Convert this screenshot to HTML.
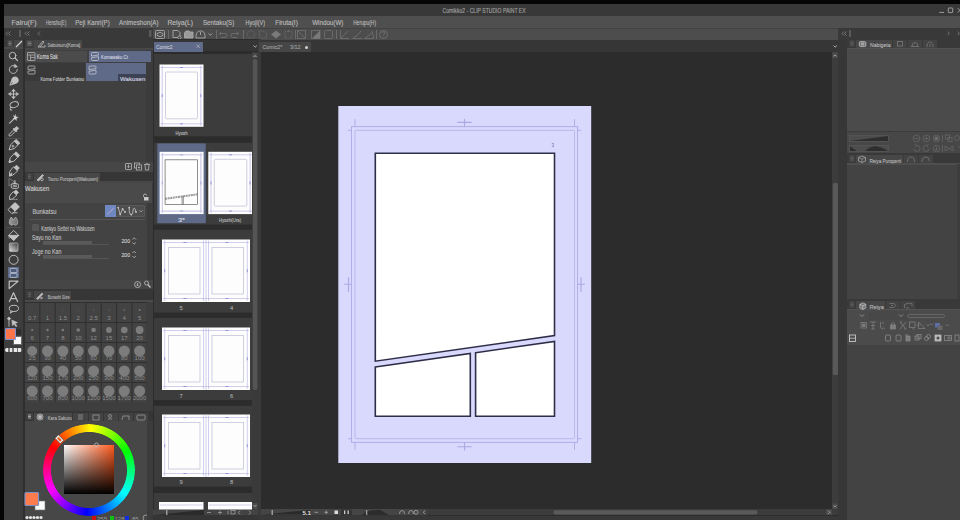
<!DOCTYPE html>
<html><head><meta charset="utf-8">
<style>
*{box-sizing:border-box;margin:0;padding:0}
html,body{width:960px;height:520px;overflow:hidden;background:#050505;font-family:"Liberation Sans",sans-serif;color:#c8c8c8}
.a{position:absolute}
.t{position:absolute;font-size:7px;line-height:8px;white-space:nowrap;color:#c4c4c4}
svg{position:absolute;overflow:visible}
</style></head><body>
<!-- ===== title bar ===== -->
<div class="a" style="left:4px;top:4px;width:956px;height:12px;background:#383838"></div>
<svg style="left:0;top:0" width="960" height="20">
 <g stroke="#a8a8a8" stroke-width="0.9" fill="none">
  <line x1="939.3" y1="12.4" x2="944" y2="12.4"/>
  <rect x="948.3" y="8" width="4.4" height="4.6" rx="0.6"/>
  <path d="M957.8 8.2 L962 12.6 M957.8 12.6 L962 8.2"/>
 </g>
</svg>
<!-- ===== menu bar ===== -->
<div class="a" style="left:4px;top:16px;width:956px;height:12px;background:#4f4f4f"></div>
<!-- ===== dock header / toolbar row ===== -->
<div class="a" style="left:4px;top:28px;width:956px;height:11px;background:#393939"></div>
<div class="a" style="left:153px;top:28px;width:685px;height:12px;background:#4d4d4d"></div><div class="a" style="left:153px;top:28px;width:685px;height:1px;background:#424242"></div>
<svg style="left:0;top:0" width="960" height="45">
 <g stroke="#7a7a7a" stroke-width="0.9" fill="none">
  <path d="M8 31.5 L6 33.5 L8 35.5 M10.5 31.5 L8.5 33.5 L10.5 35.5"/>
  <path d="M27 31.5 L25 33.5 L27 35.5 M29.5 31.5 L27.5 33.5 L29.5 35.5"/>
  <path d="M40 31.5 L38 33.5 L40 35.5"/>
  <path d="M844 31.5 L842 33.5 L844 35.5 M846.5 31.5 L844.5 33.5 L846.5 35.5"/>
  <path d="M947.6 31.6 L949.4 33.4 L947.6 35.2 M957.6 31.6 L959.4 33.4 L957.6 35.2"/>
 </g>
 <g fill="#5a5a5a">
  <rect x="19" y="30" width="2" height="7"/>
  <rect x="149" y="30" width="2.5" height="7"/>
  <rect x="849" y="30" width="2" height="7"/>
 </g>
 <!-- toolbar icons -->
 <g stroke="#a8a8a8" stroke-width="0.9" fill="none">
  <rect x="155.5" y="30.5" width="9" height="8" rx="1"/>
  <ellipse cx="160" cy="34.5" rx="3" ry="2"/>
  <path d="M173 30.5 L178 30.5 L180 32.5 L180 37.5 L173 37.5 Z"/>
  <circle cx="179.5" cy="37.5" r="1.6" fill="#484848"/>
  <path d="M184.5 33 L186 31 L189 31 L190 32 L193 32 L193 38 L184.5 38 Z" fill="#9a9a9a"/>
  <path d="M196 38 L205 38 L205 36 Q205 31 200.5 31 Q196 31 196 36 Z"/>
  <path d="M200.5 32 L200.5 35"/>
  <path d="M208.5 33.5 L210.3 35.3 L212.1 33.5"/>
 </g>
 <g stroke="#6e6e6e" stroke-width="0.9" fill="none">
  <line x1="168.5" y1="30" x2="168.5" y2="39"/>
  <line x1="216.5" y1="30" x2="216.5" y2="39"/>
  <line x1="243.5" y1="30" x2="243.5" y2="39"/>
  <line x1="295.5" y1="30" x2="295.5" y2="39"/>
  <line x1="336.5" y1="30" x2="336.5" y2="39"/>
  <line x1="376.5" y1="30" x2="376.5" y2="39"/>
  <path d="M221 32 L219.5 33.5 L221 35 M219.5 33.5 L225 33.5 Q227 33.5 227 35.5 Q227 37.5 225 37.5 L221 37.5"/>
  <path d="M237 32 L238.5 33.5 L237 35 M238.5 33.5 L233 33.5 Q231 33.5 231 35.5 Q231 37.5 233 37.5 L237 37.5"/>
  <circle cx="251" cy="34.5" r="3.8" stroke-dasharray="1 0.8"/>
  <path d="M259.5 31 L264 31 L266.5 33.5 L266.5 38 L259.5 38 Z" stroke-dasharray="1 0.8"/>
  <rect x="285" y="31.5" width="7" height="6.5" stroke-dasharray="1 0.8"/>
  <path d="M288.5 30 L288.5 31.5"/>
  <rect x="297.5" y="30.5" width="8" height="8"/>
  <path d="M297.5 30.5 L305.5 38.5"/>
  <rect x="324.5" y="30.5" width="8" height="8" rx="1"/>
  <path d="M340.5 30.5 L340.5 38.5 L349 38.5 M340.5 38.5 L348 31"/>
  <path d="M352.5 38.5 L362 38.5 M353 38 Q357 37 361 31"/>
  <path d="M364.5 38.5 L374 38.5 L372 31 M364.5 38.5 L372 33"/>
  <circle cx="383.5" cy="34.5" r="4"/>
  <path d="M382 33.2 Q382 31.8 383.5 31.8 Q385 31.8 385 33.2 Q385 34.4 383.5 34.8 L383.5 35.6 M383.5 36.8 L383.5 37.4"/>
 </g>
 <path d="M271 34.5 L276 30.5 L281 34.5 L276 38.5 Z" fill="#7a7a7a"/>
 <rect x="311.5" y="30.5" width="8.5" height="8" fill="none" stroke="#6e6e6e" stroke-width="0.9"/><path d="M312 38.5 L320 30.5 L320 38.5 Z" fill="#7a7a7a"/>
</svg>
<!-- ===== left tab row ===== -->
<div class="a" style="left:4px;top:39px;width:149px;height:9px;background:#393939"></div>
<div class="a" style="left:7px;top:40px;width:6px;height:7px;background:#414141"></div>
<div class="a" style="left:14px;top:40px;width:9px;height:8px;background:#474747"></div>
<div class="a" style="left:26px;top:40px;width:8px;height:7px;background:#414141"></div>
<div class="a" style="left:34px;top:40px;width:48px;height:8px;background:#474747"></div>
<!-- ===== tool palette ===== -->
<div class="a" style="left:4px;top:48px;width:19px;height:472px;background:#3d3d3d"></div>
<div class="a" style="left:4px;top:47px;width:19px;height:2px;background:#4a4a4a"></div>
<div class="a" style="left:23px;top:39px;width:2px;height:481px;background:#2f2f2f"></div>
<div class="a" style="left:8px;top:267px;width:11px;height:11px;background:#5c6a8c"></div>
<svg style="left:0;top:0" width="30" height="360">
 <g stroke="#8a8a8a" stroke-width="0.8"><path d="M8.5 42 H11.5 M8.5 43.5 H11.5 M8.5 45 H11.5 M27.5 42 H31.5 M27.5 43.5 H31.5 M27.5 45 H31.5"/></g>
 <path d="M16 47 L22 41" stroke="#cfcfcf" stroke-width="1.3"/>
 <path d="M38 47 L43 41 L44 42 L40 47 Z M40 47 L45 47 L45 45" stroke="#c0c0c0" stroke-width="0.8" fill="none"/>
 <g stroke="#c2c2c2" stroke-width="0.95" fill="none" stroke-linecap="round" stroke-linejoin="round">
  <!-- magnifier -->
  <circle cx="12.6" cy="55.6" r="3.3"/><path d="M15 58 L17.6 60.6" stroke-width="1.2"/>
  <!-- rotate -->
  <path d="M17.2 69.5 A3.9 3.9 0 1 1 14.5 65.8" stroke-dasharray="1 0.8"/><path d="M14.8 64.3 L17.6 66.8 L14.4 67.6 Z" fill="#c2c2c2" stroke-width="0.5"/>
  <!-- hand/zoom (cone) -->
  <path d="M10 84.8 L11.7 80.2 A3.3 3.3 0 1 1 15.8 83.4 Z" fill="#c2c2c2"/><path d="M12.2 82.6 L10.8 84" stroke="#3d3d3d" stroke-width="0.8"/>
  <!-- move -->
  <path d="M13.5 89.3 V98.7 M8.8 94 H18.2"/><path d="M11.9 91 L13.5 89.2 L15.1 91 Z M11.9 97 L13.5 98.8 L15.1 97 Z M10.5 92.4 L8.7 94 L10.5 95.6 Z M16.5 92.4 L18.3 94 L16.5 95.6 Z" fill="#c2c2c2" stroke-width="0.6"/>
  <!-- lasso -->
  <ellipse cx="14.2" cy="104.6" rx="4.3" ry="2.9" transform="rotate(-18 14.2 104.6)"/><path d="M11 107 Q9.5 108.6 10.6 110.2 L11.8 110"/>
  <!-- wand -->
  <path d="M9.6 123.2 L14 118.8" stroke-width="1.1"/><path d="M15.6 114.6 L16.1 116.9 L18.4 117.2 L16.4 118.3 L16.4 120.6 L15.1 118.9 L12.9 119.3 L14.3 117.5 L13.4 115.3 L15.2 116.5 Z" fill="#dcdcdc" stroke-width="0.4"/>
 </g>
 <g stroke="#c2c2c2" stroke-width="0.9" fill="none" stroke-linejoin="round">
  <!-- eyedropper -->
  <g transform="translate(13.4 131.7) rotate(-45)"><path d="M-6 0 L-4.8 -1.1 H1.8 V1.1 H-4.8 Z"/><rect x="1.8" y="-2.1" width="1.1" height="4.2" fill="#c2c2c2"/><rect x="2.9" y="-1.5" width="3.2" height="3" rx="1.2" fill="#c2c2c2"/></g>
 </g>
 <line x1="6.5" y1="138.5" x2="21.5" y2="138.5" stroke="#555" stroke-width="0.8"/>
 <g stroke="#c2c2c2" stroke-width="0.9" fill="none" stroke-linejoin="round">
  <!-- pen -->
  <g transform="translate(13.5 145.6) rotate(-45)"><path d="M-6.2 0 L-1.5 -2.6 H3.8 V2.6 H-1.5 Z"/><rect x="3.8" y="-2.6" width="2.4" height="5.2" fill="#c2c2c2"/><circle cx="-0.8" cy="0" r="0.9"/></g>
  <!-- pencil -->
  <g transform="translate(13.5 158) rotate(-45)"><path d="M-6.2 0 L-2 -2.5 H3.6 V2.5 H-2 Z"/><path d="M-6.2 0 L-4.2 -1.2 V1.2 Z" fill="#c2c2c2"/><rect x="3.6" y="-2.5" width="2.6" height="5" fill="#c2c2c2"/></g>
  <!-- brush -->
  <g transform="translate(13.5 171) rotate(-45)"><path d="M-6.4 0.8 Q-4 -2.8 -0.5 -2.8 H3 V2.8 H-0.5 Q-4 2.8 -6.4 0.8 Z"/><path d="M-6.4 0.8 Q-4.5 -0.6 -2.5 0.2 Q-4 2.2 -6.4 0.8 Z" fill="#c2c2c2"/><rect x="3" y="-2" width="3.2" height="4" fill="#c2c2c2"/></g>
  <!-- airbrush -->
  <path d="M9 178.5 L14 181.5 L9 186 Z" stroke="#8a8a8a" stroke-width="0.7"/>
  <rect x="11.3" y="183.8" width="7.2" height="4.6" rx="1.6"/><rect x="12.8" y="185.4" width="4.2" height="1.3" fill="#c2c2c2" stroke="none"/><path d="M14.9 180.2 V183.8" stroke-width="1.2"/><path d="M13.3 183.8 Q14.9 182 16.5 183.8" fill="#c2c2c2"/>
  <!-- decoration -->
  <g transform="translate(13.2 195.2) rotate(-45)"><path d="M-5.6 0.6 Q-3.8 -2.6 -0.5 -2.4 H2.6 V2.4 H-0.5 Q-3.8 2.6 -5.6 0.6 Z"/><rect x="2.6" y="-1.8" width="3" height="3.6" fill="#c2c2c2"/></g>
  <path d="M12.5 199.3 H18" stroke-dasharray="1.2 0.6"/>
  <!-- eraser -->
  <g transform="translate(13.6 208.3) rotate(-45)"><rect x="-5" y="-3" width="10" height="6" rx="0.8"/><rect x="-1" y="-3" width="6" height="6" rx="0.6" fill="#c2c2c2"/></g>
  <path d="M12.5 212.8 H17.5"/>
  <!-- blend -->
  <path d="M9.2 222.3 Q9.2 219.3 11.3 217 Q12.8 218.6 13.4 220 Q14 218.6 15.6 217 Q17.8 219.3 17.8 222.3 Q17.8 225 15.6 225.2 Q14.2 225.2 13.5 224 Q12.8 225.2 11.4 225.2 Q9.2 225 9.2 222.3 Z" fill="url(#gr2)" stroke-width="0.6"/>
 </g>
 <line x1="6.5" y1="227.5" x2="21.5" y2="227.5" stroke="#555" stroke-width="0.8"/>
 <g stroke="#c2c2c2" stroke-width="0.95" fill="none" stroke-linejoin="round">
  <!-- fill -->
  <path d="M8.7 235.4 L13.7 230.4 L18.7 235.4 L13.7 240.4 Z"/><path d="M8.7 235.4 H18.7 L13.7 240.4 Z" fill="#c2c2c2"/><path d="M9.2 236 Q8.6 238.2 9.8 238.6" stroke-width="0.8"/>
  <!-- gradient -->
  <rect x="9.3" y="243" width="8.7" height="8.4" rx="1" fill="url(#gr1)" stroke="#bdbdbd" stroke-width="0.7"/>
  <!-- circle -->
  <circle cx="13.6" cy="259.8" r="4.5"/>
  <!-- frame -->
  <rect x="10.2" y="268.4" width="6.8" height="4.2" rx="0.8" stroke="#c3c8d8" stroke-width="0.8" fill="#4f5c7c"/><rect x="10.2" y="273.4" width="6.8" height="4" rx="0.8" stroke="#c3c8d8" stroke-width="0.8" fill="#4f5c7c"/>
  <!-- ruler -->
  <path d="M9.2 288.6 V281.2 H18 Z" stroke-width="1.2"/>
  <!-- text -->
  <path d="M9.2 302 L13.5 292.7 L17.8 302 M10.8 298.7 H16.2" stroke-width="1.2"/>
  <!-- balloon -->
  <ellipse cx="13.9" cy="308.4" rx="4.6" ry="3.1"/><path d="M11.2 310.8 L10.2 313.2 L13 311.4"/>
  <!-- correction -->
  <path d="M9 318.2 V326.5 M7.6 318.6 H10.4" stroke-width="0.9"/><path d="M11.8 320 L17.6 322.6 L15 323.4 L17 326 L16 326.8 L14 324.2 L12.4 325.8 Z" fill="#c2c2c2" stroke-width="0.5"/><circle cx="9" cy="318.6" r="1.2" fill="#c2c2c2"/>
 </g>
 <defs><linearGradient id="gr2" x1="0" y1="0" x2="1" y2="0"><stop offset="0" stop-color="#9a9a9a"/><stop offset="1" stop-color="#707070"/></linearGradient></defs>
 <defs><linearGradient id="gr1" x1="1" y1="0" x2="0" y2="1"><stop offset="0" stop-color="#3a3a3a"/><stop offset="1" stop-color="#e0e0e0"/></linearGradient></defs>
</svg>
<!-- color swatches -->
<div class="a" style="left:15px;top:329px;width:6px;height:6px;background:#2e2e2e"></div>
<div class="a" style="left:13px;top:336px;width:9px;height:9px;background:#fafafa;border:1px solid #6a6a6a"></div>
<div class="a" style="left:5px;top:328px;width:11px;height:12px;background:#fb7348;border:1.3px solid #7b93d6;border-radius:1px"></div>
<div class="a" style="left:5px;top:348px;width:17px;height:4px;background:repeating-linear-gradient(90deg,#e8e8e8 0 3px,#777 3px 4.5px);border-radius:2px"></div>
<!-- ===== sub tool panel ===== -->
<div class="a" style="left:25px;top:48px;width:128px;height:124px;background:#3c3c3c"></div><div class="a" style="left:25px;top:162px;width:128px;height:10px;background:#464646"></div>
<div class="a" style="left:25px;top:48px;width:128px;height:2px;background:#474747"></div>
<div class="a" style="left:25px;top:50px;width:120.5px;height:112px;background:#404040"></div>
<div class="a" style="left:25px;top:51px;width:62px;height:11px;background:#4b4b4b"></div>
<div class="a" style="left:89px;top:51px;width:62px;height:11px;background:#5e6a88"></div>
<div class="a" style="left:25px;top:63px;width:60px;height:18px;background:#393939"></div>
<div class="a" style="left:86px;top:63px;width:60px;height:18px;background:#5e6a88"></div>
<div class="a" style="left:118px;top:74px;width:28px;height:7px;background:#3c4254"></div>
<svg style="left:0;top:0" width="160" height="180">
 <g stroke="#a9a9a9" stroke-width="0.9" fill="none">
  <rect x="27.5" y="52.5" width="7.5" height="8" rx="0.5"/><path d="M27.5 55 H35 M30.5 55 V60.5 M30.5 57.5 H35" stroke-width="0.8"/>
  <path d="M91.5 56.1 V53.5 Q91.5 52.5 92.5 52.5 H97.5 Q98.5 52.5 98.5 53.5 V55.1 Z" stroke="#b8bcc8"/><path d="M91.5 57.7 L98.5 56.7 V59.5 Q98.5 60.5 97.5 60.5 H92.5 Q91.5 60.5 91.5 59.5 Z" stroke="#b8bcc8"/>
  <path d="M28 69.6 V67 Q28 66 29 66 H34 Q35 66 35 67 V68.6 Z" stroke="#a9a9a9"/><path d="M28 71.2 L35 70.2 V73 Q35 74 34 74 H29 Q28 74 28 73 Z" stroke="#a9a9a9"/>
  <path d="M89 69.6 V67 Q89 66 90 66 H95 Q96 66 96 67 V68.6 Z" stroke="#b8bcc8"/><path d="M89 71.2 L96 70.2 V73 Q96 74 95 74 H90 Q89 74 89 73 Z" stroke="#b8bcc8"/>
 </g>
 <!-- bottom bar icons -->
 <g stroke="#b6b6b6" stroke-width="0.8" fill="none">
  <rect x="125.5" y="163.5" width="6" height="6" rx="0.5"/><path d="M128.5 164.5 V167.5 M127 166.2 L128.5 167.7 L130 166.2"/>
  <rect x="134.5" y="163" width="5" height="5"/><rect x="136.5" y="165" width="5" height="5" fill="#3a3a3a"/><path d="M139 166.2 V168.8 M137.7 167.5 H140.3"/>
  <path d="M144 164.5 H150 M145 164.5 L145.5 170 H148.5 L149 164.5 M146.2 163.5 H147.8"/>
 </g>
</svg>
<!-- ===== tool property ===== -->
<div class="a" style="left:25px;top:172px;width:128px;height:9px;background:#363636"></div>
<div class="a" style="left:26px;top:173px;width:7px;height:7px;background:#3e3e3e"></div>
<div class="a" style="left:34px;top:173px;width:66px;height:8px;background:#474747"></div>
<div class="a" style="left:25px;top:181px;width:128px;height:108px;background:#3b3b3b"></div>
<div class="a" style="left:25px;top:181px;width:128px;height:2px;background:#474747"></div>
<div class="a" style="left:25px;top:183px;width:122px;height:97px;background:#434343"></div>
<div class="a" style="left:25px;top:183px;width:127px;height:20px;background:#4a4a4a"></div>
<div class="a" style="left:25px;top:280px;width:128px;height:9.5px;background:#464646"></div>
<div class="a" style="left:104.8px;top:205px;width:40.2px;height:11.8px;background:#4e4e4e;border:0.6px solid #585858;border-radius:1px"></div>
<div class="a" style="left:104.8px;top:205px;width:11.3px;height:11.8px;background:#7088c0"></div>
<div class="a" style="left:30px;top:219px;width:115px;height:1px;background:#555"></div>
<div class="a" style="left:32px;top:224px;width:7px;height:7px;background:#555;border-radius:1px"></div>
<div class="a" style="left:43px;top:244px;width:66px;height:1px;background:#555"></div>
<div class="a" style="left:43px;top:241px;width:49px;height:3px;background:#5a5a5a"></div>
<div class="a" style="left:43px;top:258px;width:66px;height:1px;background:#555"></div>
<div class="a" style="left:43px;top:255px;width:49px;height:3px;background:#5a5a5a"></div>
<svg style="left:0;top:0" width="160" height="300">
 <g stroke="#c0c0c0" stroke-width="0.8" fill="none">
  <path d="M37 180 L42.5 174.5 L43.5 175.5 L38.5 181 Z" fill="#bbb"/><circle cx="42" cy="179.5" r="1.3"/>
  <path d="M107.3 214.4 L113.8 208" stroke="#c8a8d0" stroke-width="0.9"/>
  <path d="M118.2 207.6 L120.2 214.4 L122.6 209 L125 212" stroke="#c8c8c8"/>
  <g fill="#c8c8c8" stroke="none"><circle cx="118.2" cy="207.6" r="0.9"/><circle cx="120.2" cy="214.4" r="0.9"/><circle cx="122.6" cy="209" r="0.9"/><circle cx="125" cy="212" r="0.9"/><circle cx="129.2" cy="207.6" r="0.9"/><circle cx="131.2" cy="214.6" r="0.9"/><circle cx="136" cy="212" r="0.9"/></g>
  <path d="M129.2 207.6 Q129 214.6 131.2 214.6 Q133 214.6 133 211 Q133 208.2 134.2 208.2 Q135.4 208.2 136 212" stroke="#c8c8c8"/>
  <path d="M139.3 210.2 L141 211.9 L142.7 210.2" stroke="#aaa"/>
  <path d="M132.5 239.5 L134.2 237.8 L135.9 239.5 M132.5 242.5 L134.2 244.2 L135.9 242.5"/>
  <path d="M132.5 253 L134.2 251.3 L135.9 253 M132.5 256 L134.2 257.7 L135.9 256"/>
  <rect x="144" y="197" width="4.5" height="3.5" fill="#c8c8c8" stroke="none"/><path d="M143.5 197 V195.8 Q143.5 194 145 194 Q146.5 194 146.5 195.5" stroke-width="0.8"/>
  <circle cx="137.6" cy="284.6" r="3"/><path d="M137.6 283 V285.8 M136.5 284.8 L137.6 285.9 L138.7 284.8"/>
  <circle cx="146.5" cy="283" r="2"/><path d="M147.8 284.5 L150.5 287.5" stroke-width="1.2"/>
 </g>
</svg>
<!-- ===== brush size ===== -->
<div class="a" style="left:25px;top:289px;width:128px;height:11px;background:#363636"></div>
<div class="a" style="left:26px;top:291px;width:7px;height:7px;background:#3e3e3e"></div>
<div class="a" style="left:34px;top:291px;width:37px;height:9px;background:#474747"></div>
<div class="a" style="left:25px;top:300px;width:128px;height:112px;background:#3e3e3e"></div>
<div class="a" style="left:25px;top:300px;width:128px;height:2px;background:#4b4b4b"></div>
<div class="a" style="left:24px;top:302px;width:123px;height:101px;background:#2f2f2f"></div>
<svg style="left:0;top:0" width="160" height="420">
 <path d="M36.5 298.5 L42 293 L43 294 L38 299.5 Z" fill="#bbb" stroke="#c0c0c0" stroke-width="0.6"/><circle cx="41.5" cy="298" r="1.3" fill="#999"/>
 <g><rect x="25.00" y="303.00" width="14.35" height="19.00" fill="#434343"/><rect x="40.35" y="303.00" width="14.35" height="19.00" fill="#434343"/><rect x="55.70" y="303.00" width="14.35" height="19.00" fill="#434343"/><rect x="71.05" y="303.00" width="14.35" height="19.00" fill="#434343"/><rect x="86.40" y="303.00" width="14.35" height="19.00" fill="#434343"/><rect x="101.75" y="303.00" width="14.35" height="19.00" fill="#434343"/><rect x="117.10" y="303.00" width="14.35" height="19.00" fill="#434343"/><rect x="132.45" y="303.00" width="14.35" height="19.00" fill="#434343"/><rect x="25.00" y="323.00" width="14.35" height="19.00" fill="#434343"/><rect x="40.35" y="323.00" width="14.35" height="19.00" fill="#434343"/><rect x="55.70" y="323.00" width="14.35" height="19.00" fill="#434343"/><rect x="71.05" y="323.00" width="14.35" height="19.00" fill="#434343"/><rect x="86.40" y="323.00" width="14.35" height="19.00" fill="#434343"/><rect x="101.75" y="323.00" width="14.35" height="19.00" fill="#434343"/><rect x="117.10" y="323.00" width="14.35" height="19.00" fill="#434343"/><rect x="132.45" y="323.00" width="14.35" height="19.00" fill="#434343"/><rect x="25.00" y="343.00" width="14.35" height="19.00" fill="#434343"/><rect x="40.35" y="343.00" width="14.35" height="19.00" fill="#434343"/><rect x="55.70" y="343.00" width="14.35" height="19.00" fill="#434343"/><rect x="71.05" y="343.00" width="14.35" height="19.00" fill="#434343"/><rect x="86.40" y="343.00" width="14.35" height="19.00" fill="#434343"/><rect x="101.75" y="343.00" width="14.35" height="19.00" fill="#434343"/><rect x="117.10" y="343.00" width="14.35" height="19.00" fill="#434343"/><rect x="132.45" y="343.00" width="14.35" height="19.00" fill="#434343"/><rect x="25.00" y="363.00" width="14.35" height="19.00" fill="#434343"/><rect x="40.35" y="363.00" width="14.35" height="19.00" fill="#434343"/><rect x="55.70" y="363.00" width="14.35" height="19.00" fill="#434343"/><rect x="71.05" y="363.00" width="14.35" height="19.00" fill="#434343"/><rect x="86.40" y="363.00" width="14.35" height="19.00" fill="#434343"/><rect x="101.75" y="363.00" width="14.35" height="19.00" fill="#434343"/><rect x="117.10" y="363.00" width="14.35" height="19.00" fill="#434343"/><rect x="132.45" y="363.00" width="14.35" height="19.00" fill="#434343"/><rect x="25.00" y="383.00" width="14.35" height="19.00" fill="#434343"/><rect x="40.35" y="383.00" width="14.35" height="19.00" fill="#434343"/><rect x="55.70" y="383.00" width="14.35" height="19.00" fill="#434343"/><rect x="71.05" y="383.00" width="14.35" height="19.00" fill="#434343"/><rect x="86.40" y="383.00" width="14.35" height="19.00" fill="#434343"/><rect x="101.75" y="383.00" width="14.35" height="19.00" fill="#434343"/><rect x="117.10" y="383.00" width="14.35" height="19.00" fill="#434343"/><rect x="132.45" y="383.00" width="14.35" height="19.00" fill="#434343"/><circle cx="32.17" cy="310.00" r="0.3" fill="#7c7c7c"/><text x="32.17" y="319.50" font-size="6" fill="#8e8e8e" text-anchor="middle" font-family="Liberation Sans">0.7</text><circle cx="47.52" cy="310.00" r="0.35" fill="#7c7c7c"/><text x="47.52" y="319.50" font-size="6" fill="#8e8e8e" text-anchor="middle" font-family="Liberation Sans">1</text><circle cx="62.88" cy="310.00" r="0.4" fill="#7c7c7c"/><text x="62.88" y="319.50" font-size="6" fill="#8e8e8e" text-anchor="middle" font-family="Liberation Sans">1.5</text><circle cx="78.22" cy="310.00" r="0.45" fill="#7c7c7c"/><text x="78.22" y="319.50" font-size="6" fill="#8e8e8e" text-anchor="middle" font-family="Liberation Sans">2</text><circle cx="93.58" cy="310.00" r="0.5" fill="#7c7c7c"/><text x="93.58" y="319.50" font-size="6" fill="#8e8e8e" text-anchor="middle" font-family="Liberation Sans">2.5</text><circle cx="108.92" cy="310.00" r="0.55" fill="#7c7c7c"/><text x="108.92" y="319.50" font-size="6" fill="#8e8e8e" text-anchor="middle" font-family="Liberation Sans">3</text><circle cx="124.27" cy="310.00" r="0.8" fill="#7c7c7c"/><text x="124.27" y="319.50" font-size="6" fill="#8e8e8e" text-anchor="middle" font-family="Liberation Sans">4</text><circle cx="139.62" cy="310.00" r="1.0" fill="#7c7c7c"/><text x="139.62" y="319.50" font-size="6" fill="#8e8e8e" text-anchor="middle" font-family="Liberation Sans">5</text><circle cx="32.17" cy="330.00" r="1.1" fill="#7c7c7c"/><text x="32.17" y="339.50" font-size="6" fill="#8e8e8e" text-anchor="middle" font-family="Liberation Sans">6</text><circle cx="47.52" cy="330.00" r="1.2" fill="#7c7c7c"/><text x="47.52" y="339.50" font-size="6" fill="#8e8e8e" text-anchor="middle" font-family="Liberation Sans">7</text><circle cx="62.88" cy="330.00" r="1.3" fill="#7c7c7c"/><text x="62.88" y="339.50" font-size="6" fill="#8e8e8e" text-anchor="middle" font-family="Liberation Sans">8</text><circle cx="78.22" cy="330.00" r="1.8" fill="#7c7c7c"/><text x="78.22" y="339.50" font-size="6" fill="#8e8e8e" text-anchor="middle" font-family="Liberation Sans">10</text><circle cx="93.58" cy="330.00" r="2.3" fill="#7c7c7c"/><text x="93.58" y="339.50" font-size="6" fill="#8e8e8e" text-anchor="middle" font-family="Liberation Sans">12</text><circle cx="108.92" cy="330.00" r="2.9" fill="#7c7c7c"/><text x="108.92" y="339.50" font-size="6" fill="#8e8e8e" text-anchor="middle" font-family="Liberation Sans">15</text><circle cx="124.27" cy="330.00" r="3.3" fill="#7c7c7c"/><text x="124.27" y="339.50" font-size="6" fill="#8e8e8e" text-anchor="middle" font-family="Liberation Sans">17</text><circle cx="139.62" cy="330.00" r="3.9" fill="#7c7c7c"/><text x="139.62" y="339.50" font-size="6" fill="#8e8e8e" text-anchor="middle" font-family="Liberation Sans">20</text><circle cx="32.17" cy="351.00" r="5" fill="#7c7c7c"/><text x="32.17" y="359.50" font-size="6" fill="#8e8e8e" text-anchor="middle" font-family="Liberation Sans">25</text><circle cx="47.52" cy="351.00" r="5.5" fill="#7c7c7c"/><text x="47.52" y="359.50" font-size="6" fill="#8e8e8e" text-anchor="middle" font-family="Liberation Sans">30</text><circle cx="62.88" cy="351.00" r="5.5" fill="#7c7c7c"/><text x="62.88" y="359.50" font-size="6" fill="#8e8e8e" text-anchor="middle" font-family="Liberation Sans">40</text><circle cx="78.22" cy="351.00" r="5.5" fill="#7c7c7c"/><text x="78.22" y="359.50" font-size="6" fill="#8e8e8e" text-anchor="middle" font-family="Liberation Sans">50</text><circle cx="93.58" cy="351.00" r="5.5" fill="#7c7c7c"/><text x="93.58" y="359.50" font-size="6" fill="#8e8e8e" text-anchor="middle" font-family="Liberation Sans">60</text><circle cx="108.92" cy="351.00" r="5.5" fill="#7c7c7c"/><text x="108.92" y="359.50" font-size="6" fill="#8e8e8e" text-anchor="middle" font-family="Liberation Sans">70</text><circle cx="124.27" cy="351.00" r="5.5" fill="#7c7c7c"/><text x="124.27" y="359.50" font-size="6" fill="#8e8e8e" text-anchor="middle" font-family="Liberation Sans">80</text><circle cx="139.62" cy="351.00" r="5.5" fill="#7c7c7c"/><text x="139.62" y="359.50" font-size="6" fill="#8e8e8e" text-anchor="middle" font-family="Liberation Sans">100</text><circle cx="32.17" cy="371.00" r="5.5" fill="#7c7c7c"/><text x="32.17" y="379.50" font-size="6" fill="#8e8e8e" text-anchor="middle" font-family="Liberation Sans">120</text><circle cx="47.52" cy="371.00" r="5.5" fill="#7c7c7c"/><text x="47.52" y="379.50" font-size="6" fill="#8e8e8e" text-anchor="middle" font-family="Liberation Sans">150</text><circle cx="62.88" cy="371.00" r="5.5" fill="#7c7c7c"/><text x="62.88" y="379.50" font-size="6" fill="#8e8e8e" text-anchor="middle" font-family="Liberation Sans">170</text><circle cx="78.22" cy="371.00" r="5.5" fill="#7c7c7c"/><text x="78.22" y="379.50" font-size="6" fill="#8e8e8e" text-anchor="middle" font-family="Liberation Sans">200</text><circle cx="93.58" cy="371.00" r="5.5" fill="#7c7c7c"/><text x="93.58" y="379.50" font-size="6" fill="#8e8e8e" text-anchor="middle" font-family="Liberation Sans">250</text><circle cx="108.92" cy="371.00" r="5.5" fill="#7c7c7c"/><text x="108.92" y="379.50" font-size="6" fill="#8e8e8e" text-anchor="middle" font-family="Liberation Sans">300</text><circle cx="124.27" cy="371.00" r="5.5" fill="#7c7c7c"/><text x="124.27" y="379.50" font-size="6" fill="#8e8e8e" text-anchor="middle" font-family="Liberation Sans">400</text><circle cx="139.62" cy="371.00" r="5.5" fill="#7c7c7c"/><text x="139.62" y="379.50" font-size="6" fill="#8e8e8e" text-anchor="middle" font-family="Liberation Sans">500</text><circle cx="32.17" cy="391.00" r="5.5" fill="#7c7c7c"/><text x="32.17" y="399.50" font-size="6" fill="#8e8e8e" text-anchor="middle" font-family="Liberation Sans">600</text><circle cx="47.52" cy="391.00" r="5.5" fill="#7c7c7c"/><text x="47.52" y="399.50" font-size="6" fill="#8e8e8e" text-anchor="middle" font-family="Liberation Sans">700</text><circle cx="62.88" cy="391.00" r="5.5" fill="#7c7c7c"/><text x="62.88" y="399.50" font-size="6" fill="#8e8e8e" text-anchor="middle" font-family="Liberation Sans">800</text><circle cx="78.22" cy="391.00" r="5.5" fill="#7c7c7c"/><text x="78.22" y="399.50" font-size="6" fill="#8e8e8e" text-anchor="middle" font-family="Liberation Sans">1000</text><circle cx="93.58" cy="391.00" r="5.5" fill="#7c7c7c"/><text x="93.58" y="399.50" font-size="6" fill="#8e8e8e" text-anchor="middle" font-family="Liberation Sans">1200</text><circle cx="108.92" cy="391.00" r="5.5" fill="#7c7c7c"/><text x="108.92" y="399.50" font-size="6" fill="#8e8e8e" text-anchor="middle" font-family="Liberation Sans">1500</text><circle cx="124.27" cy="391.00" r="5.5" fill="#7c7c7c"/><text x="124.27" y="399.50" font-size="6" fill="#8e8e8e" text-anchor="middle" font-family="Liberation Sans">1700</text><circle cx="139.62" cy="391.00" r="5.5" fill="#7c7c7c"/><text x="139.62" y="399.50" font-size="6" fill="#8e8e8e" text-anchor="middle" font-family="Liberation Sans">2000</text></g>
</svg>
<div class="a" style="left:25px;top:402px;width:122px;height:9px;background:#3e3e3e"></div>
<!-- ===== color circle ===== -->
<div class="a" style="left:25px;top:411px;width:128px;height:10px;background:#363636"></div>
<div class="a" style="left:26px;top:413px;width:7px;height:7px;background:#3e3e3e"></div>
<div class="a" style="left:34px;top:413px;width:38px;height:8px;background:#484848"></div>
<div class="a" style="left:73px;top:413px;width:15px;height:8px;background:#434343"></div>
<div class="a" style="left:89px;top:413px;width:14px;height:8px;background:#434343"></div>
<div class="a" style="left:104px;top:413px;width:14px;height:8px;background:#434343"></div>
<div class="a" style="left:119px;top:413px;width:14px;height:8px;background:#434343"></div>
<div class="a" style="left:134px;top:413px;width:14px;height:8px;background:#434343"></div>
<div class="a" style="left:25px;top:421px;width:128px;height:99px;background:#474747"></div>
<div class="a" style="left:42.5px;top:423.8px;width:92px;height:92px;border-radius:50%;background:conic-gradient(from 3deg,#ffff00,#80ff00 30deg,#00ff00 60deg,#00ff80 90deg,#00ffff 120deg,#0080ff 150deg,#0000ff 180deg,#8000ff 210deg,#ff00ff 240deg,#ff0080 270deg,#ff0000 300deg,#ff8000 330deg,#ffff00 360deg);-webkit-mask:radial-gradient(circle,transparent 37.6px,#000 38.4px);mask:radial-gradient(circle,transparent 37.6px,#000 38.4px)"></div>
<div class="a" style="left:64px;top:445px;width:50px;height:49px;background:linear-gradient(to bottom,rgba(0,0,0,0),#000),linear-gradient(to right,#fff,#ff5a1e)"></div>
<svg style="left:0;top:0" width="160" height="520">
 <g stroke="#c0c0c0" stroke-width="0.8" fill="none">
  <path d="M28 415 H31 M28 416.5 H31 M28 418 H31"/>
  <circle cx="40" cy="417" r="3"/><rect x="38.7" y="415.7" width="2.6" height="2.6" fill="#c0c0c0"/>
  <path d="M78 415 H83 M78 417 H83 M78 419 H83" stroke="#999"/>
  <rect x="93" y="415" width="6" height="5" stroke="#999"/>
  <circle cx="110" cy="416" r="1.5" stroke="#999"/><path d="M108 419 H112" stroke="#999"/>
  <path d="M122 420 L123 416 H129 V420" stroke="#999"/>
  <rect x="137" y="415" width="8" height="5" rx="1" stroke="#999"/>
 </g>
 <g transform="rotate(-44 59.4 439.2)"><rect x="56.9" y="435.3" width="5" height="7.8" fill="#e8e4e0" stroke="#333" stroke-width="0.5"/><rect x="58.4" y="436.8" width="2" height="4.8" rx="1" fill="#f05a18"/></g>
 <circle cx="96.5" cy="445" r="2" fill="none" stroke="#b8b8b8" stroke-width="0.8"/>
 <rect x="35" y="501" width="10" height="9" fill="#fafafa" stroke="#777" stroke-width="0.6"/>
 <rect x="25" y="492.5" width="13.5" height="13" rx="1" fill="#fd7c4e" stroke="#7c90c8" stroke-width="1.2"/>
 <g fill="#e6e6e6"><circle cx="27" cy="517.5" r="1.6"/><circle cx="30.5" cy="517.5" r="1.6"/><circle cx="34" cy="517.5" r="1.6"/><circle cx="37.5" cy="517.5" r="1.6"/><circle cx="41" cy="517.5" r="1.6"/></g>
 <rect x="92" y="516" width="4" height="4" fill="#d01010"/>
 <rect x="110" y="516" width="4" height="4" fill="#10c010"/>
 <rect x="125" y="516" width="4" height="4" fill="#1030e0"/>
 <text x="97" y="521" font-size="6" fill="#9a9a9a" font-family="Liberation Sans">255</text>
 <text x="114.5" y="521" font-size="6" fill="#9a9a9a" font-family="Liberation Sans">128</text>
 <text x="132" y="521" font-size="6" fill="#9a9a9a" font-family="Liberation Sans">85</text>
 <circle cx="146" cy="518" r="3" fill="none" stroke="#aaa" stroke-width="0.8"/>
</svg>
<div class="a" style="left:147px;top:421px;width:6px;height:99px;background:#3c3c3c"></div>
<!-- ===== page manager ===== -->
<div class="a" style="left:153px;top:39px;width:105px;height:481px;background:#2c2c2c"></div>
<div class="a" style="left:153px;top:40px;width:105px;height:11px;background:#353535"></div>
<div class="a" style="left:154px;top:42px;width:49px;height:9.5px;background:#5e6a88"></div>
<svg style="left:0;top:0" width="270" height="520"><path d="M196.5 44.5 L200 48 M200 44.5 L196.5 48" stroke="#aab" stroke-width="0.8"/><path d="M253.5 45.5 L255.2 47.2 L256.9 45.5" stroke="#bbb" stroke-width="0.9" fill="none"/><rect x="154" y="54" width="98" height="82.3" fill="#3c3c3c"/><rect x="154" y="142.8" width="98" height="81.7" fill="#3c3c3c"/><rect x="154" y="229.8" width="98" height="82.7" fill="#3c3c3c"/><rect x="154" y="318" width="98" height="82.0" fill="#3c3c3c"/><rect x="154" y="405.8" width="98" height="80.7" fill="#3c3c3c"/><rect x="154" y="493" width="98" height="16.5" fill="#3c3c3c"/><rect x="157.3" y="143.4" width="48.5" height="79.8" fill="#5e6a88"/><rect x="159.5" y="64.5" width="44" height="62.3" fill="#fdfdfd"/><path d="M160.5 67.5 H202.5 M160.5 123.8 H202.5 M162.2 65.5 V125.8 M200.8 65.5 V125.8" stroke="#a3a1dc" stroke-width="0.55" fill="none"/><path d="M180.0 67.5 H183.0 M180.0 123.8 H183.0 M162.2 94.15 V97.15 M200.8 94.15 V97.15" stroke="#8c8ad0" stroke-width="0.9" fill="none"/><rect x="165.5" y="72.0" width="32" height="46.8" rx="1" fill="none" stroke="#c4c4d8" stroke-width="0.8"/><rect x="159.6" y="151.8" width="44" height="62.3" fill="#fdfdfd"/><path d="M160.6 154.8 H202.6 M160.6 211.10000000000002 H202.6 M162.29999999999998 152.8 V213.10000000000002 M200.9 152.8 V213.10000000000002" stroke="#a3a1dc" stroke-width="0.55" fill="none"/><path d="M180.1 154.8 H183.1 M180.1 211.10000000000002 H183.1 M162.29999999999998 181.45000000000002 V184.45000000000002 M200.9 181.45000000000002 V184.45000000000002" stroke="#8c8ad0" stroke-width="0.9" fill="none"/><rect x="165.1" y="159.8" width="32.5" height="44.80000000000001" fill="none" stroke="#6a6a6a" stroke-width="0.75"/><path d="M165.1 198.3 L197.6 193.8 M165.1 199.3 L197.6 194.8" stroke="#666" stroke-width="0.7" stroke-dasharray="2 0.6"/><path d="M182.1 196.3 V204.60000000000002 M183.29999999999998 196.10000000000002 V204.60000000000002" stroke="#666" stroke-width="0.7"/><rect x="162.29999999999998" y="154.8" width="38.6" height="56.3" fill="none" stroke="#c8c8e0" stroke-width="0.5"/><rect x="208.3" y="151.8" width="44.5" height="62.3" fill="#fdfdfd"/><path d="M209.3 154.8 H251.8 M209.3 211.10000000000002 H251.8 M211.0 152.8 V213.10000000000002 M250.10000000000002 152.8 V213.10000000000002" stroke="#a3a1dc" stroke-width="0.55" fill="none"/><path d="M229.05 154.8 H232.05 M229.05 211.10000000000002 H232.05 M211.0 181.45000000000002 V184.45000000000002 M250.10000000000002 181.45000000000002 V184.45000000000002" stroke="#8c8ad0" stroke-width="0.9" fill="none"/><rect x="214.3" y="159.3" width="32.5" height="46.8" rx="1" fill="none" stroke="#c4c4d8" stroke-width="0.8"/><rect x="162" y="239.5" width="88" height="62.5" fill="#fdfdfd"/><path d="M163 242.5 H249 M163 298.5 H249 M164.7 240.5 V301.0 M247.3 240.5 V301.0 M203.5 240.5 V301.0 M208.5 240.5 V301.0 M206.0 239.5 V302.0" stroke="#a3a1dc" stroke-width="0.5" fill="none"/><path d="M183.5 242.5 H186.5 M183.5 298.5 H186.5" stroke="#8c8ad0" stroke-width="0.9"/><path d="M225.5 242.5 H228.5 M225.5 298.5 H228.5" stroke="#8c8ad0" stroke-width="0.9"/><path d="M164.7 269.25 V272.25 M247.3 269.25 V272.25" stroke="#8c8ad0" stroke-width="0.9"/><rect x="168.5" y="247.5" width="31.5" height="46.5" fill="none" stroke="#c4c4d8" stroke-width="0.8"/><rect x="212.0" y="247.5" width="31.5" height="46.5" fill="none" stroke="#c4c4d8" stroke-width="0.8"/><rect x="162" y="327.5" width="88" height="62.5" fill="#fdfdfd"/><path d="M163 330.5 H249 M163 386.5 H249 M164.7 328.5 V389.0 M247.3 328.5 V389.0 M203.5 328.5 V389.0 M208.5 328.5 V389.0 M206.0 327.5 V390.0" stroke="#a3a1dc" stroke-width="0.5" fill="none"/><path d="M183.5 330.5 H186.5 M183.5 386.5 H186.5" stroke="#8c8ad0" stroke-width="0.9"/><path d="M225.5 330.5 H228.5 M225.5 386.5 H228.5" stroke="#8c8ad0" stroke-width="0.9"/><path d="M164.7 357.25 V360.25 M247.3 357.25 V360.25" stroke="#8c8ad0" stroke-width="0.9"/><rect x="168.5" y="335.5" width="31.5" height="46.5" fill="none" stroke="#c4c4d8" stroke-width="0.8"/><rect x="212.0" y="335.5" width="31.5" height="46.5" fill="none" stroke="#c4c4d8" stroke-width="0.8"/><rect x="162" y="414.5" width="88" height="62.5" fill="#fdfdfd"/><path d="M163 417.5 H249 M163 473.5 H249 M164.7 415.5 V476.0 M247.3 415.5 V476.0 M203.5 415.5 V476.0 M208.5 415.5 V476.0 M206.0 414.5 V477.0" stroke="#a3a1dc" stroke-width="0.5" fill="none"/><path d="M183.5 417.5 H186.5 M183.5 473.5 H186.5" stroke="#8c8ad0" stroke-width="0.9"/><path d="M225.5 417.5 H228.5 M225.5 473.5 H228.5" stroke="#8c8ad0" stroke-width="0.9"/><path d="M164.7 444.25 V447.25 M247.3 444.25 V447.25" stroke="#8c8ad0" stroke-width="0.9"/><rect x="168.5" y="422.5" width="31.5" height="46.5" fill="none" stroke="#c4c4d8" stroke-width="0.8"/><rect x="212.0" y="422.5" width="31.5" height="46.5" fill="none" stroke="#c4c4d8" stroke-width="0.8"/><rect x="159" y="502" width="44.5" height="8" fill="#fdfdfd"/><rect x="208" y="502" width="44" height="8" fill="#fdfdfd"/><path d="M160 505 H202.5 M209 505 H251" stroke="#a3a1dc" stroke-width="0.5"/><rect x="252" y="52" width="6" height="458" fill="#3a3a3a"/><rect x="252.5" y="53" width="5" height="5" fill="#4a4a4a"/><path d="M253.5 57 L255 55.5 L256.5 57" stroke="#bbb" stroke-width="0.8" fill="none"/><rect x="252.8" y="59" width="4.6" height="331" rx="2" fill="#555555"/><rect x="252.5" y="503" width="5" height="6" fill="#4a4a4a"/><path d="M253.5 505 L255 506.5 L256.5 505" stroke="#bbb" stroke-width="0.8" fill="none"/><rect x="153" y="509.5" width="105" height="6" fill="#434343"/><path d="M155 515 L204 510 V515 Z" fill="#2a2a2a"/><rect x="166" y="510" width="1.5" height="5" fill="#999"/><g stroke="#aaa" stroke-width="0.7" fill="none"><path d="M207 512.5 H211 M218 512.5 H222 M220 510.5 V514.5 M228 510.5 V514.5"/><rect x="231" y="510.5" width="4" height="3.5"/><path d="M240 510.5 L238.5 512.5 L240 514.5 M249 510.5 L250.5 512.5 L249 514.5"/></g><rect x="153" y="515.5" width="105" height="4.5" fill="#353535"/></svg>
<div class="a" style="left:258px;top:39px;width:3px;height:481px;background:#3a3a3a"></div>
<!-- ===== canvas ===== -->
<div class="a" style="left:261px;top:40px;width:577px;height:12px;background:#363636"></div>
<div class="a" style="left:259px;top:42px;width:52px;height:10px;background:#464646"></div>
<div class="a" style="left:305px;top:46px;width:3px;height:3px;border-radius:50%;background:#d0d0d0"></div>
<div class="a" style="left:261px;top:52px;width:571px;height:457px;background:#2c2c2c"></div>
<svg style="left:0;top:0" width="960" height="520">
 <path d="M833.5 45.5 L835.2 47.2 L836.9 45.5" stroke="#bbb" stroke-width="0.9" fill="none"/>
 <rect x="832" y="52" width="6" height="457" fill="#3c3c3c"/>
 <rect x="832.5" y="52.5" width="5" height="5.5" fill="#4c4c4c"/><path d="M833.6 56.3 L835 54.9 L836.4 56.3" stroke="#bbb" stroke-width="0.8" fill="none"/>
 <rect x="832.8" y="183" width="5.2" height="192" rx="1.5" fill="#595959"/>
 <rect x="832.5" y="503.5" width="5" height="5.5" fill="#4c4c4c"/><path d="M833.6 505.5 L835 506.9 L836.4 505.5" stroke="#bbb" stroke-width="0.8" fill="none"/>
 <rect x="261" y="509" width="577" height="6.5" fill="#3c3c3c"/>
 <rect x="261" y="509" width="166" height="6.5" fill="#454545"/>
 <path d="M262 514.5 L310 510 V514.5 Z" fill="#2a2a2a"/><rect x="271.5" y="510" width="1.5" height="5" fill="#999"/>
 <text x="302.5" y="514.6" font-size="6" fill="#e0e0e0" font-family="Liberation Sans" font-weight="bold">5.1</text>
 <g stroke="#aaa" stroke-width="0.8" fill="none">
  <path d="M314.5 512.3 H318 M324.5 512.3 H328 M326.2 510.5 V514.1"/>
  <path d="M399.5 514 Q399.5 510.5 402 510.5 Q404.5 510.5 404.5 514 M408.5 514 Q408.5 510.5 411 510.5 Q413.5 510.5 413.5 514"/>
  <circle cx="416" cy="512.3" r="2"/><path d="M425 510.5 L423.2 512.3 L425 514.1"/>
 </g>
 <rect x="334.5" y="510.5" width="3.5" height="3.5" fill="#ddd"/>
 <rect x="341" y="509.5" width="11" height="5.5" fill="#333"/><rect x="344" y="510.5" width="1.3" height="3.6" fill="#ccc"/><rect x="347.5" y="510.5" width="1.3" height="3.6" fill="#ccc"/>
 <path d="M362 515 L366 512 Q372 509.5 380 510 L389 515 Z" fill="#2c2c2c"/><rect x="366" y="510" width="1.3" height="5" fill="#999"/>
 <rect x="553.5" y="510.2" width="204" height="4.3" rx="2" fill="#5a5a5a"/>
 <rect x="826" y="509.5" width="6" height="5.5" fill="#4c4c4c"/><path d="M828.3 510.8 L829.8 512.3 L828.3 513.8" stroke="#bbb" stroke-width="0.8" fill="none"/>
 <rect x="258" y="515.5" width="580" height="4.5" fill="#383838"/>
</svg>
<!-- page -->
<svg style="left:0;top:0" width="960" height="520">
 <rect x="338.3" y="106" width="252.9" height="357" fill="#d9d8fd"/>
 <g fill="none" stroke="#b1aee8" stroke-width="1">
  <rect x="351.5" y="126.6" width="226" height="315.8"/>
  <rect x="355" y="130.3" width="219.5" height="308.4" rx="1" stroke="#bbb8ea"/>
  <path d="M355 119.2 V126.6 M574.5 119.2 V126.6 M355 442.4 V449.8 M574.5 442.4 V449.8 M348 130.3 H351.5 M577.5 130.3 H581.2 M348 438.7 H351.5 M577.5 438.7 H581.2"/>
 </g>
 <g stroke="#aba8e2" stroke-width="1.1" fill="none">
  <path d="M457.3 122.4 H471.7 M464.5 119 V126.4"/>
  <path d="M457.3 446.8 H471.7 M464.5 442.5 V450.5"/>
  <path d="M344.2 284.2 H351.5 M348.5 277.3 V291.9"/>
  <path d="M577.5 284.2 H585 M581 277.3 V291.9"/>
 </g>
 <text x="551.5" y="146.5" font-size="4.5" fill="#6a68a0" font-family="Liberation Sans">3</text>
 <g fill="#ffffff" stroke="#2e2e48" stroke-width="1.6" stroke-linejoin="miter">
  <path d="M375.3 153.2 H554.5 V335.6 L375.3 361.2 Z"/>
  <path d="M375.3 367 L470.3 353.4 V416.3 H375.3 Z"/>
  <path d="M475.6 352.7 L554.5 341.4 V416.3 H475.6 Z"/>
 </g>
</svg>
<!-- ===== right dock ===== -->
<div class="a" style="left:838px;top:39px;width:9px;height:481px;background:#373737"></div>
<div class="a" style="left:847px;top:39px;width:113px;height:9px;background:#393939"></div>
<div class="a" style="left:849px;top:40px;width:6px;height:7px;background:#414141"></div>
<div class="a" style="left:856px;top:40px;width:36px;height:8px;background:#474747"></div>
<div class="a" style="left:893px;top:40px;width:14px;height:8px;background:#434343"></div>
<div class="a" style="left:908px;top:40px;width:14px;height:8px;background:#434343"></div>
<div class="a" style="left:923px;top:40px;width:14px;height:8px;background:#434343"></div>
<div class="a" style="left:847px;top:48px;width:113px;height:83px;background:#4b4b4b"></div>
<div class="a" style="left:847px;top:47.5px;width:113px;height:1.5px;background:#525252"></div>
<div class="a" style="left:847px;top:131px;width:113px;height:1px;background:#3c3c3c"></div>
<div class="a" style="left:847px;top:132px;width:113px;height:21px;background:#474747"></div>
<div class="a" style="left:847px;top:153px;width:113px;height:10px;background:#393939"></div>
<div class="a" style="left:849px;top:155px;width:6px;height:7px;background:#414141"></div>
<div class="a" style="left:856px;top:155px;width:47px;height:8px;background:#474747"></div>
<div class="a" style="left:904px;top:155px;width:14px;height:8px;background:#434343"></div>
<div class="a" style="left:919px;top:155px;width:14px;height:8px;background:#434343"></div>
<div class="a" style="left:847px;top:163px;width:113px;height:136px;background:#434343"></div>
<div class="a" style="left:847px;top:163px;width:113px;height:1.5px;background:#4e4e4e"></div>
<div class="a" style="left:957px;top:164px;width:3px;height:135px;background:#3d3d3d"></div>
<div class="a" style="left:847px;top:299px;width:113px;height:10px;background:#393939"></div>
<div class="a" style="left:849px;top:301px;width:6px;height:7px;background:#414141"></div>
<div class="a" style="left:856px;top:301px;width:29px;height:8px;background:#474747"></div>
<div class="a" style="left:886px;top:301px;width:14px;height:8px;background:#434343"></div>
<div class="a" style="left:901px;top:301px;width:14px;height:8px;background:#434343"></div>
<div class="a" style="left:847px;top:309px;width:113px;height:36px;background:#4b4b4b"></div>
<div class="a" style="left:847px;top:309px;width:113px;height:1px;background:#535353"></div>
<div class="a" style="left:869px;top:311px;width:40px;height:9px;background:#484848"></div>
<div class="a" style="left:907px;top:313.5px;width:38px;height:4px;border:1px solid #666;border-radius:2px"></div>
<div class="a" style="left:847px;top:345px;width:113px;height:175px;background:#434343"></div>
<svg style="left:0;top:0" width="960" height="520">
 <g stroke="#9a9a9a" stroke-width="0.8" fill="none">
  <path d="M850.5 42 H853.5 M850.5 43.5 H853.5 M850.5 45 H853.5 M850.5 157 H853.5 M850.5 158.5 H853.5 M850.5 160 H853.5 M850.5 303 H853.5 M850.5 304.5 H853.5 M850.5 306 H853.5" stroke="#6a6a6a" stroke-width="0.7"/>
  <rect x="859.3" y="41.6" width="6.6" height="5" rx="1.3" fill="#777" stroke="#bdbdbd"/><path d="M861 43.2 H864.2 M861 44.8 H864.2" stroke="#ddd" stroke-width="0.6"/>
  <g stroke="#7a7a7a"><rect x="897.5" y="41.5" width="5" height="4.5"/>
  <path d="M912 46.5 Q912 42.5 915 42.5 Q918 42.5 918 46.5 M911 46.5 H919"/>
  <path d="M927 47 Q927 42 930 42 Q933 42 933 47 M930 44 V47"/></g>
  <path d="M858.5 157.5 L862 156 L865.5 157.5 V161 L862 162.5 L858.5 161 Z" stroke="#aaa"/><path d="M858.5 157.5 L862 159 L865.5 157.5 M862 159 V162.5" stroke="#aaa" stroke-width="0.6"/>
  <path d="M907.5 162 Q907.5 157 911 157 Q914.5 157 914.5 162" stroke="#777"/>
  <path d="M922 162 Q922 157 926 157 Q929 157 929.5 161" stroke="#777"/>
  <path d="M859.8 304.3 L862.8 302.8 L865.8 304.3 V308 L862.8 309.6 L859.8 308 Z" stroke="#b8b8b8" fill="#777"/><path d="M859.8 304.3 L862.8 305.9 L865.8 304.3 M862.8 305.9 V309.6" stroke="#d0d0d0" stroke-width="0.6"/>
  <path d="M889.5 303.5 H894 L895.5 305.5 L894 307.5 H889.5 M891 305.5 H893" stroke="#777"/>
  <path d="M904.5 308 V304.5 Q908 302.5 912 303.5 V306 M906 308 H909" stroke="#777"/>
  <path d="M860 314.5 L862 316.5 L864 314.5 M899 314.5 L901 316.5 L903 314.5"/>
 </g>
 <!-- nav controls -->
 <rect x="849.5" y="135.5" width="39" height="6" fill="#4d4d4d" stroke="#5a5a5a" stroke-width="0.6"/>
 <path d="M850 141 L888 136 V141 Z" fill="#2e2e2e"/>
 <rect x="849.5" y="145.5" width="39" height="6" fill="#4d4d4d" stroke="#5a5a5a" stroke-width="0.6"/>
 <path d="M850 151 V146 L856.5 151 Z M865 151 Q870 146.5 875 146.2 Q881 146.5 888 151 Z" fill="#2e2e2e"/>
 <g stroke="#666" stroke-width="0.8" fill="none">
  <circle cx="916.5" cy="138.5" r="3.3"/><path d="M914.5 138.5 H918.5"/>
  <circle cx="926.5" cy="138.5" r="3.3"/><path d="M924.5 138.5 H928.5 M926.5 136.5 V140.5"/>
  <circle cx="936.5" cy="138.5" r="3.3"/><rect x="935" y="137" width="3" height="3" fill="#727272"/>
  <path d="M942.5 135 V142 M942.5 145 V152"/>
  <rect x="945.5" y="135" width="4" height="4"/><rect x="948" y="137.5" width="4" height="4"/>
  <circle cx="957" cy="138" r="2.5"/>
  <path d="M914 148.5 A3 3 0 1 0 916.5 145.5 M914.5 144.5 L916.5 145.5 L915 147"/>
  <path d="M929 148.5 A3 3 0 1 1 926.5 145.5 M928.5 144.5 L926.5 145.5 L928 147"/>
  <circle cx="936.5" cy="148.5" r="3.3"/><path d="M936.5 146.5 V150 M935 148.8 L936.5 150.3 L938 148.8"/>
  <path d="M945 146 L949 148.5 L945 151 Z M953 146 L949.5 148.5 L953 151 Z M958 146 L960 148"/>
 </g>
 <!-- layer toolbar -->
 <g transform="translate(-11 0)" stroke="#7e7e7e" stroke-width="0.8" fill="none">
  <rect x="872" y="322.5" width="5.5" height="5.5"/><rect x="873.5" y="324" width="2.5" height="2.5" fill="#7e7e7e"/>
  <path d="M881 322 H887 M884 322 V329 M882 325.5 H886 M882.5 329 H885.5"/>
  <path d="M891.5 322 V327 Q891.5 329 894 329 M893 323 H895 M894 327.5 L896 329"/>
  <rect x="901.5" y="325" width="5" height="4" fill="#7e7e7e"/>  <path d="M902.5 325 V323.5 Q904 321.5 905.5 323.5 V325"/>
  <path d="M911 322 L917 329 M911 329 L917 322 M911 322 H913 M917 329 H915"/>
  <rect x="920.5" y="322" width="5.5" height="5.5"/><path d="M923 327.5 L925.5 330 M927.5 324.5 L929 326 L930.5 324.5"/>
  <path d="M929.5 322 L936 328.5 M929.5 322 V328.5 H936 M937.5 324.5 L939 326 L940.5 324.5"/>
  <path d="M941 323.5 L942.5 325 L944 323.5"/>
 </g>
 <rect x="935" y="323" width="5" height="4.5" fill="#5a6ea8"/><rect x="937.5" y="325.5" width="5" height="4.5" fill="#666"/><path d="M946 324.5 L947.5 326 L949 324.5" stroke="#7e7e7e" stroke-width="0.8" fill="none"/>
 <g stroke="#8a8a8a" stroke-width="0.8" fill="none">
  <rect x="849.5" y="335" width="6" height="6.5" stroke="#c8c8c8" stroke-width="0.9"/><path d="M849.5 338.2 H855.5" stroke="#c8c8c8"/>
  <rect x="885.5" y="335" width="5" height="6" rx="1"/>
  <rect x="896" y="335" width="5" height="6" rx="1"/>
  <path d="M906 336 H910 V341 H906 Z M905 335 H908" fill="#7a7a7a"/>
  <rect x="915" y="336" width="4" height="4"/><rect x="917" y="334.5" width="4" height="4"/>
  <circle cx="926.5" cy="338.5" r="2"/><circle cx="928.5" cy="336.5" r="2"/>
  <rect x="935" y="335" width="6" height="6" fill="#bbb" stroke="#bbb"/><circle cx="938" cy="338" r="1.5" fill="#4b4b4b" stroke="none"/>
  <rect x="944.5" y="335.5" width="7" height="5"/><circle cx="949" cy="338" r="1.3"/>
  <rect x="955" y="335" width="4" height="6"/>
 </g>
</svg>
<svg style="left:0;top:0" width="160" height="520"><g stroke="#6e6e6e" stroke-width="0.7"><path d="M28 174.8 H31 M28 176.5 H31 M28 178.2 H31 M28 292.8 H31 M28 294.5 H31 M28 296.2 H31"/></g></svg>
<!--TEXT--><svg style="left:0;top:0;position:absolute" width="960" height="520" font-family="Liberation Sans"><text x="442.5" y="12.6" font-size="6.6" fill="#a4a4a4" stroke="#a4a4a4" stroke-width="0.12" textLength="83.1" lengthAdjust="spacingAndGlyphs">Comikku2 - CLIP STUDIO PAINT EX</text><text x="11.5" y="24.6" font-size="6.6" fill="#bcbcbc" stroke="#bcbcbc" stroke-width="0.12" textLength="25.1" lengthAdjust="spacingAndGlyphs">Fairu(F)</text><text x="46" y="24.6" font-size="6.6" fill="#bcbcbc" stroke="#bcbcbc" stroke-width="0.12" textLength="20.3" lengthAdjust="spacingAndGlyphs">Henshu(E)</text><text x="75.2" y="24.6" font-size="6.6" fill="#bcbcbc" stroke="#bcbcbc" stroke-width="0.12" textLength="34.5" lengthAdjust="spacingAndGlyphs">Peji Kanri(P)</text><text x="119" y="24.6" font-size="6.6" fill="#bcbcbc" stroke="#bcbcbc" stroke-width="0.12" textLength="39.6" lengthAdjust="spacingAndGlyphs">Animeshon(A)</text><text x="167.4" y="24.6" font-size="6.6" fill="#bcbcbc" stroke="#bcbcbc" stroke-width="0.12" textLength="25.7" lengthAdjust="spacingAndGlyphs">Reiya(L)</text><text x="202.9" y="24.6" font-size="6.6" fill="#bcbcbc" stroke="#bcbcbc" stroke-width="0.12" textLength="31.5" lengthAdjust="spacingAndGlyphs">Sentaku(S)</text><text x="245.5" y="24.6" font-size="6.6" fill="#bcbcbc" stroke="#bcbcbc" stroke-width="0.12" textLength="19.5" lengthAdjust="spacingAndGlyphs">Hyoji(V)</text><text x="275.2" y="24.6" font-size="6.6" fill="#bcbcbc" stroke="#bcbcbc" stroke-width="0.12" textLength="22.6" lengthAdjust="spacingAndGlyphs">Firuta(I)</text><text x="312.2" y="24.6" font-size="6.6" fill="#bcbcbc" stroke="#bcbcbc" stroke-width="0.12" textLength="31.2" lengthAdjust="spacingAndGlyphs">Windou(W)</text><text x="353.3" y="24.6" font-size="6.6" fill="#bcbcbc" stroke="#bcbcbc" stroke-width="0.12" textLength="22.7" lengthAdjust="spacingAndGlyphs">Herupu(H)</text><text x="47.4" y="47.2" font-size="5.2" fill="#b4b4b4" stroke="#b4b4b4" stroke-width="0.12" textLength="32.8" lengthAdjust="spacingAndGlyphs">Sabutsuru[Koma]</text><text x="36.8" y="59.2" font-size="6.4" fill="#d6d6d6" stroke="#d6d6d6" stroke-width="0.12" textLength="21.1" lengthAdjust="spacingAndGlyphs">Koma Sak</text><text x="101" y="59.2" font-size="6.2" fill="#d4d7e0" stroke="#d4d7e0" stroke-width="0.12" textLength="26.9" lengthAdjust="spacingAndGlyphs">Komawaku Ct</text><text x="40.4" y="80.6" font-size="6.2" fill="#c8c8c8" stroke="#c8c8c8" stroke-width="0.12" textLength="43.8" lengthAdjust="spacingAndGlyphs">Koma Folder Bunkatsu</text><text x="120" y="80.6" font-size="6.2" fill="#d4d7e0" stroke="#d4d7e0" stroke-width="0.12" textLength="25.4" lengthAdjust="spacingAndGlyphs">Wakusen</text><text x="47.7" y="181.4" font-size="5.0" fill="#b4b4b4" stroke="#b4b4b4" stroke-width="0.12" textLength="50.3" lengthAdjust="spacingAndGlyphs">Tsuru Puroperti[Wakusen]</text><text x="25.1" y="191" font-size="6.6" fill="#d0d0d0" stroke="#d0d0d0" stroke-width="0.12" textLength="24.1" lengthAdjust="spacingAndGlyphs">Wakusen</text><text x="32.5" y="214" font-size="6.4" fill="#c0c0c0" stroke="#c0c0c0" stroke-width="0.12" textLength="24.0" lengthAdjust="spacingAndGlyphs">Bunkatsu</text><text x="41.2" y="231" font-size="6.4" fill="#c0c0c0" stroke="#c0c0c0" stroke-width="0.12" textLength="53.4" lengthAdjust="spacingAndGlyphs">Kankyo Settei no Wakusen</text><text x="32" y="240" font-size="6.4" fill="#c0c0c0" stroke="#c0c0c0" stroke-width="0.12" textLength="29.3" lengthAdjust="spacingAndGlyphs">Sayu no Kan</text><text x="121.5" y="243.3" font-size="5.6" fill="#d0d0d0" stroke="#d0d0d0" stroke-width="0.12" textLength="8.5" lengthAdjust="spacingAndGlyphs">200</text><text x="32" y="253.8" font-size="6.4" fill="#c0c0c0" stroke="#c0c0c0" stroke-width="0.12" textLength="29.3" lengthAdjust="spacingAndGlyphs">Joge no Kan</text><text x="121.5" y="257.3" font-size="5.6" fill="#d0d0d0" stroke="#d0d0d0" stroke-width="0.12" textLength="8.5" lengthAdjust="spacingAndGlyphs">200</text><text x="47.7" y="299.3" font-size="5.2" fill="#b4b4b4" stroke="#b4b4b4" stroke-width="0.12" textLength="21.9" lengthAdjust="spacingAndGlyphs">Burashi Size</text><text x="47.7" y="420.4" font-size="5.2" fill="#b4b4b4" stroke="#b4b4b4" stroke-width="0.12" textLength="24.1" lengthAdjust="spacingAndGlyphs">Kara Sakuru</text><text x="156" y="49" font-size="5.6" fill="#c4c8d4" stroke="#c4c8d4" stroke-width="0.12" textLength="16.5" lengthAdjust="spacingAndGlyphs">Comic2</text><text x="262.5" y="48.6" font-size="5.6" fill="#a0a0a0" stroke="#a0a0a0" stroke-width="0.12" textLength="19.7" lengthAdjust="spacingAndGlyphs">Comic2*</text><text x="290" y="48.6" font-size="5.6" fill="#a0a0a0" stroke="#a0a0a0" stroke-width="0.12" textLength="10.5" lengthAdjust="spacingAndGlyphs">3/12</text><text x="870" y="47" font-size="5.4" fill="#b8b8b8" stroke="#b8b8b8" stroke-width="0.12" textLength="20.6" lengthAdjust="spacingAndGlyphs">Nabigeta</text><text x="869.4" y="162.5" font-size="5.4" fill="#b8b8b8" stroke="#b8b8b8" stroke-width="0.12" textLength="31.9" lengthAdjust="spacingAndGlyphs">Reiya Puroperti</text><text x="869.4" y="308.8" font-size="5.4" fill="#b8b8b8" stroke="#b8b8b8" stroke-width="0.12" textLength="14.4" lengthAdjust="spacingAndGlyphs">Reiya</text><text x="175.5" y="134.8" font-size="5.8" fill="#bdbdbd" stroke="#bdbdbd" stroke-width="0.12" textLength="12.0" lengthAdjust="spacingAndGlyphs">Hyosh</text><text x="178" y="221.8" font-size="5.8" fill="#d8dbe4" stroke="#d8dbe4" stroke-width="0.12" textLength="7.0" lengthAdjust="spacingAndGlyphs">3*</text><text x="219" y="221.8" font-size="5.8" fill="#bdbdbd" stroke="#bdbdbd" stroke-width="0.12" textLength="22.0" lengthAdjust="spacingAndGlyphs">Hyoshi(Ura)</text><text x="181" y="309.5" font-size="5.8" fill="#bdbdbd" text-anchor="middle">5</text><text x="231.5" y="309.5" font-size="5.8" fill="#bdbdbd" text-anchor="middle">4</text><text x="181" y="397.5" font-size="5.8" fill="#bdbdbd" text-anchor="middle">7</text><text x="231.5" y="397.5" font-size="5.8" fill="#bdbdbd" text-anchor="middle">6</text><text x="181" y="484" font-size="5.8" fill="#bdbdbd" text-anchor="middle">9</text><text x="231.5" y="484" font-size="5.8" fill="#bdbdbd" text-anchor="middle">8</text></svg><!--/TEXT-->
</body></html>
